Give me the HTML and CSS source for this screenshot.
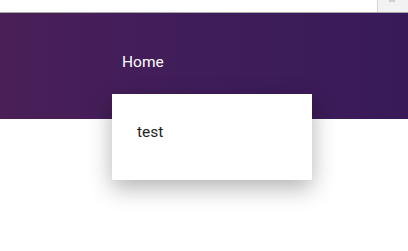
FILE: index.html
```html
<!DOCTYPE html>
<html lang="en">
<head>
    <meta charset="UTF-8">
    <title>Home</title>
    <link rel="stylesheet" href="styles.css">
</head>
<body>
    <div class="topbar">
        <div class="topbar-tab"><span class="tab-mark"></span></div>
    </div>

    <header class="hero">
        <nav class="nav">
            <a class="nav-link" href="#">Home</a>
        </nav>
    </header>

    <main class="content">
        <div class="card">
            <p class="card-text">test</p>
        </div>
    </main>
</body>
</html>
```

FILE: styles.css
```css
body {
    margin: 0;
    font-family: Roboto, "Liberation Sans", sans-serif;
    background-color: #fff;
}

.topbar {
    height: 12px;
    background-color: #fff;
    border-bottom: 1px solid #a8a8a8;
    display: flex;
    justify-content: flex-end;
}

.topbar-tab {
    width: 30px;
    background-color: #f2f2f2;
    border-left: 1px solid #d6d6d6;
    position: relative;
}

.tab-mark {
    position: absolute;
    left: 11px;
    top: 0;
    width: 6px;
    height: 2px;
    background-color: #cfcfcf;
}

.hero {
    height: 106px;
    background: linear-gradient(to right, #4a1f58, #3f1d5a 50%, #391a58);
    padding-left: 122px;
    box-sizing: border-box;
    padding-top: 39px;
}

.nav-link {
    color: #fff;
    font-size: 15.5px;
    text-decoration: none;
}

.content {
    min-height: 132px;
}

.card {
    margin-top: -25px;
    margin-left: 112px;
    width: 200px;
    height: 86px;
    background-color: #fff;
    box-shadow: 0 8px 22px rgba(0, 0, 0, 0.3);
    padding: 29px 0 0 25px;
    box-sizing: border-box;
}

.card-text {
    margin: 0;
    font-size: 15.5px;
    color: #1e1e1e;
}
```
